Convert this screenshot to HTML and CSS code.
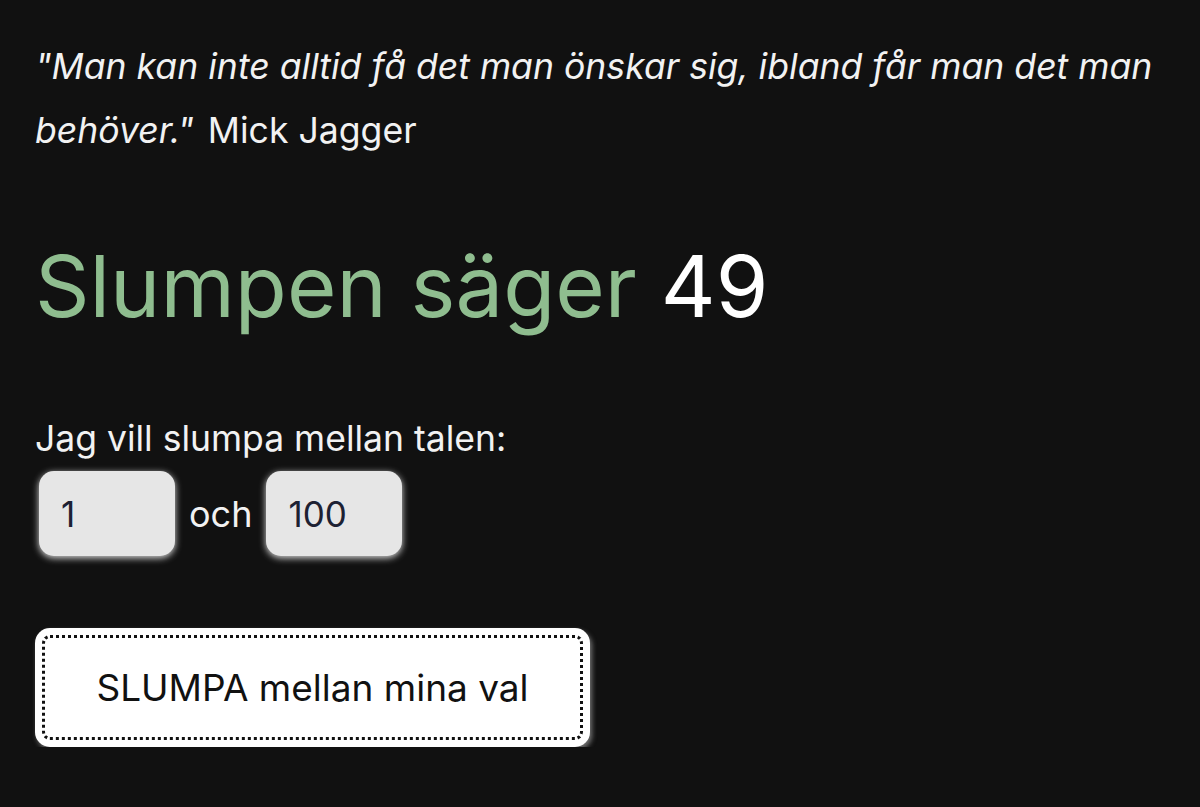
FILE: index.html
```html
<!DOCTYPE html>
<html lang="sv">
<head>
  <meta charset="UTF-8">
  <meta name="viewport" content="width=device-width, initial-scale=1">
  <title>Slumpen</title>
  <link rel="stylesheet" href="styles.css">
</head>
<body>

  <div class="page">
    <p class="quote"><em>"Man kan inte alltid få det man önskar sig, ibland får man det man behöver."</em> Mick Jagger</p>

    <h1 class="result">Slumpen säger <span class="number">49</span></h1>

    <form class="picker" onsubmit="return false;">
      <label for="low">Jag vill slumpa mellan talen:</label>
      <div class="range">
        <input type="text" id="low" value="1">
        <span>och</span>
        <input type="text" id="high" value="100">
      </div>
      <button type="button" class="roll">SLUMPA mellan mina val</button>
    </form>
  </div>

</body>
</html>
```

FILE: styles.css
```css
body {
  font-family: Inter, "Noto Sans", sans-serif;
  background: #111111;
  color: #f2f2f2;
  margin: 0;
  padding: 0 35px;
}
.page {
  padding-top: 35px;
}
.quote {
  font-size: 35.6px;
  line-height: 64px;
  margin: 0;
}
.quote em {
  padding-right: 4px;
}
.result {
  color: #8fbd8f;
  font-size: 85px;
  font-weight: 400;
  line-height: 104px;
  margin: 72px 0 0;
}
.result .number {
  color: #ffffff;
}
.picker label {
  display: block;
  margin-top: 78px;
  font-size: 35.5px;
  line-height: 44px;
}
.range {
  display: flex;
  align-items: center;
  gap: 14px;
  margin-top: 10px;
  font-size: 36px;
}
.range input {
  width: 136px;
  height: 85px;
  box-sizing: border-box;
  padding: 0 22px;
  border: none;
  border-radius: 15px;
  background: #e6e6e6;
  color: #1d2133;
  font-family: inherit;
  font-size: 35px;
  box-shadow: 0 2px 7px rgba(255, 255, 255, 0.85);
}
.range input:first-child {
  margin-left: 4px;
}
.roll {
  display: block;
  width: 555px;
  height: 119px;
  margin-top: 72px;
  background: #ffffff;
  color: #111111;
  border: none;
  border-radius: 15px;
  outline: 3px dotted #111111;
  outline-offset: -10px;
  font-family: inherit;
  font-size: 37px;
  box-shadow: 2px 3px 5px rgba(160, 160, 160, 0.7);
  cursor: pointer;
}
```
